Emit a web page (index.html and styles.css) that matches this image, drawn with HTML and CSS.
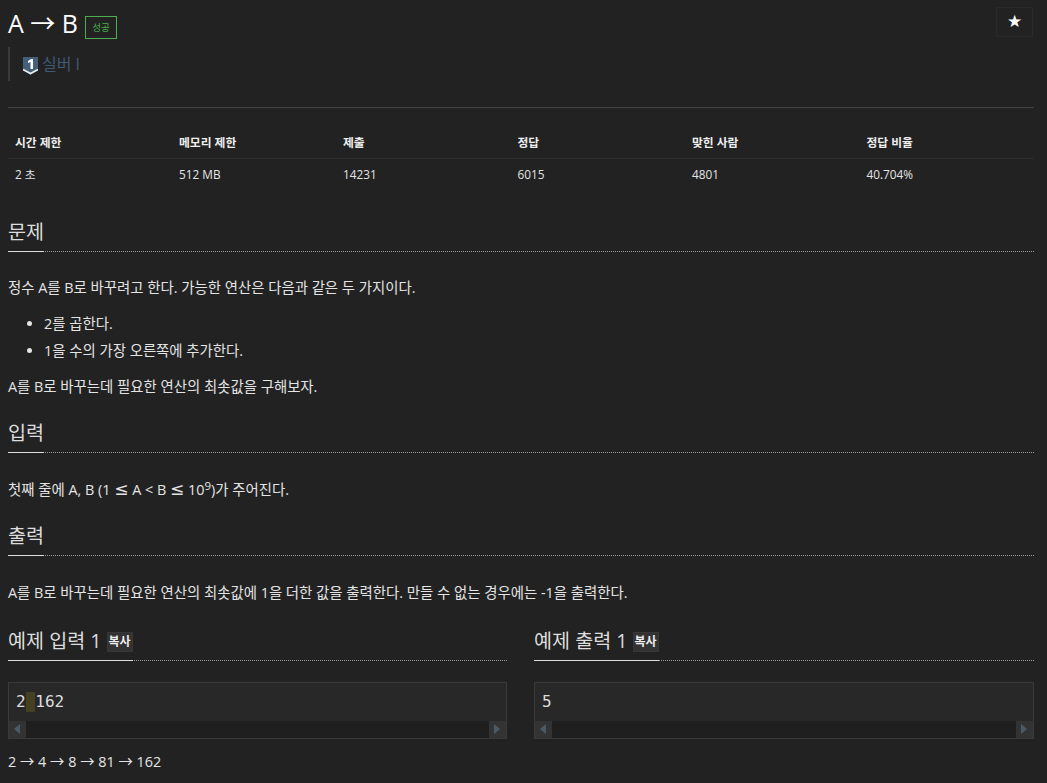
FILE: index.html
```html
<!DOCTYPE html>
<html lang="ko">
<head>
<meta charset="utf-8">
<title>A → B</title>
<link rel="stylesheet" href="styles.css">
</head>
<body>
<div class="page">
  <header class="title-row">
    <h1 class="title">A → B</h1>
    <span class="badge">성공</span>
    <button class="star">★</button>
  </header>
  <div class="tier">
    <svg class="tier-icon" width="15" height="19" viewBox="0 0 15 19"><path d="M0 0H15V13L7.5 18L0 13Z" fill="#435f7a"/><path d="M0 12.5L7.5 16.5L15 12.5" fill="none" stroke="#e8edf2" stroke-width="1.6"/><path d="M5 4L8 2H10V12H7.5V5L5 6Z" fill="#fff"/></svg>
    <span class="tier-text">실버 I</span>
  </div>
  <hr class="rule">
  <table class="stats">
    <thead><tr><th class="c1">시간 제한</th><th class="c2">메모리 제한</th><th class="c3">제출</th><th class="c4">정답</th><th class="c5">맞힌 사람</th><th class="c6">정답 비율</th></tr></thead>
    <tbody><tr><td>2 초</td><td>512 MB</td><td>14231</td><td>6015</td><td>4801</td><td>40.704%</td></tr></tbody>
  </table>
  <section class="sec sec-first">
    <h2 class="head"><span>문제</span></h2>
    <p class="lead">정수 A를 B로 바꾸려고 한다. 가능한 연산은 다음과 같은 두 가지이다.</p>
    <ul><li>2를 곱한다.</li><li>1을 수의 가장 오른쪽에 추가한다.</li></ul>
    <p>A를 B로 바꾸는데 필요한 연산의 최솟값을 구해보자.</p>
  </section>
  <section class="sec">
    <h2 class="head"><span>입력</span></h2>
    <p class="lead">첫째 줄에 A, B (1 <span class="le">≤</span> A &lt; B <span class="le">≤</span> 10<sup>9</sup>)가 주어진다.</p>
  </section>
  <section class="sec">
    <h2 class="head"><span>출력</span></h2>
    <p class="lead">A를 B로 바꾸는데 필요한 연산의 최솟값에 1을 더한 값을 출력한다. 만들 수 없는 경우에는 -1을 출력한다.</p>
  </section>
  <div class="samples">
    <section class="sample">
      <h2 class="head"><span>예제 입력 1 <em class="copy">복사</em></span></h2>
      <div class="codebox"><pre class="code">2<i class="hl"> </i>162</pre><div class="hbar"><b class="arrow left"></b><b class="arrow right"></b></div></div>
    </section>
    <section class="sample">
      <h2 class="head"><span>예제 출력 1 <em class="copy">복사</em></span></h2>
      <div class="codebox"><pre class="code">5</pre><div class="hbar"><b class="arrow left"></b><b class="arrow right"></b></div></div>
    </section>
  </div>
  <p class="hint">2 → 4 → 8 → 81 → 162</p>
</div>
</body>
</html>
```
FILE: styles.css
```css
* { box-sizing: border-box; }
html, body { margin: 0; height: 100%; overflow: hidden; }
body {
  background: #222;
  color: #e4e4e4;
  font: 14.4px/22px "Open Sans", "Noto Sans CJK KR", sans-serif;
}
.page { width: 1026px; margin-left: 8px; }
.title-row { display: flex; align-items: flex-start; height: 47px; position: relative; }
.title { margin: 6px 0 0; font-size: 25px; line-height: 34px; font-weight: 400; color: #fff; }
.badge {
  margin: 16px 0 0 7px;
  width: 32px; height: 23px;
  border: 1px solid #4cae4c;
  color: #4cae4c;
  font-size: 9.6px; line-height: 21px; text-align: center;
}
.star {
  margin-left: auto; margin-right: 1px; margin-top: 7px;
  width: 37px; height: 30px;
  background: #222; border: 1px solid #2a2a2a; color: #fff;
  font: 17px/24px "DejaVu Sans", sans-serif; padding: 0 0 3px;
}
.tier {
  display: flex; align-items: center; gap: 4px;
  height: 34px; border-left: 2px solid #3a3a3a; padding-left: 13px;
}
.tier-text { font-size: 16px; color: #3f5a74; }
.tier-icon { margin-top: 4px; }
.rule { margin: 26px 0 0; border: 0; border-top: 1px solid #444; }
.stats { width: 100%; table-layout: fixed; border-collapse: collapse; margin-top: 19px; font-size: 11.8px; }
.stats th, .stats td { padding: 7px; text-align: left; line-height: 17px; }
.stats th { font-weight: 700; color: #eee; border-bottom: 1px solid #2d2d2d; height: 31px; }
.stats td { height: 31px; }
.c1, .c2 { width: 164px; }
.c3, .c4, .c5 { width: 174.5px; }
.c6 { width: auto; }
.sec { padding-top: 19px; }
.sec-first { padding-top: 26px; }
.head {
  display: flex; align-items: flex-start;
  margin: 0;
  font-size: 19.6px; line-height: 32px; font-weight: 400; color: #ddd;
  border-bottom: 1px dotted #999;
  height: 36px;
}
.head span { display: block; height: 36px; border-bottom: 1px solid #ddd; }
p { margin: 0; }
.lead { margin-top: 26px; }
.sec-first .lead { margin-top: 25px; }
ul { margin: 14px 0; padding: 0 0 0 36px; }
li { margin-bottom: 5px; }
li:last-child { margin-bottom: 0; }
.le { font: 17px/20px "DejaVu Sans", sans-serif; }
sup { font-size: 11.5px; line-height: 0; vertical-align: 5px; }
.samples { display: grid; grid-template-columns: 499px 500px; gap: 27px; margin-top: 21px; }
.copy {
  font: 700 12px/18px "Open Sans", "Noto Sans CJK KR", sans-serif;
  color: #eee; background: #333; border: 1px solid #373737;
  display: inline-block; padding: 0 1px; margin: -4px 0; vertical-align: 2px;
}
.codebox {
  margin-top: 21px; height: 57px;
  border: 1px solid #3a3a3a; background: #1f1f1f;
}
.code {
  margin: 0; height: 38px; padding: 0 7px;
  background: #282828; color: #ddd;
  font: 16px/38px "DejaVu Sans Mono", monospace;
}
.hl { background: #45401f; display: inline-block; height: 20px; line-height: 20px; vertical-align: baseline; }
.hbar { display: flex; justify-content: space-between; height: 17px; background: #1f1f1f; }
.arrow { display: block; width: 17px; height: 17px; background: #333; position: relative; }
.arrow::after {
  content: ""; position: absolute; top: 3px; left: 5px; width: 0; height: 0;
  border-top: 5px solid transparent; border-bottom: 5px solid transparent;
}
.left::after { border-right: 6px solid #4c5a66; }
.right::after { border-left: 6px solid #4c5a66; }
.hint { margin-top: 12px; }
```
